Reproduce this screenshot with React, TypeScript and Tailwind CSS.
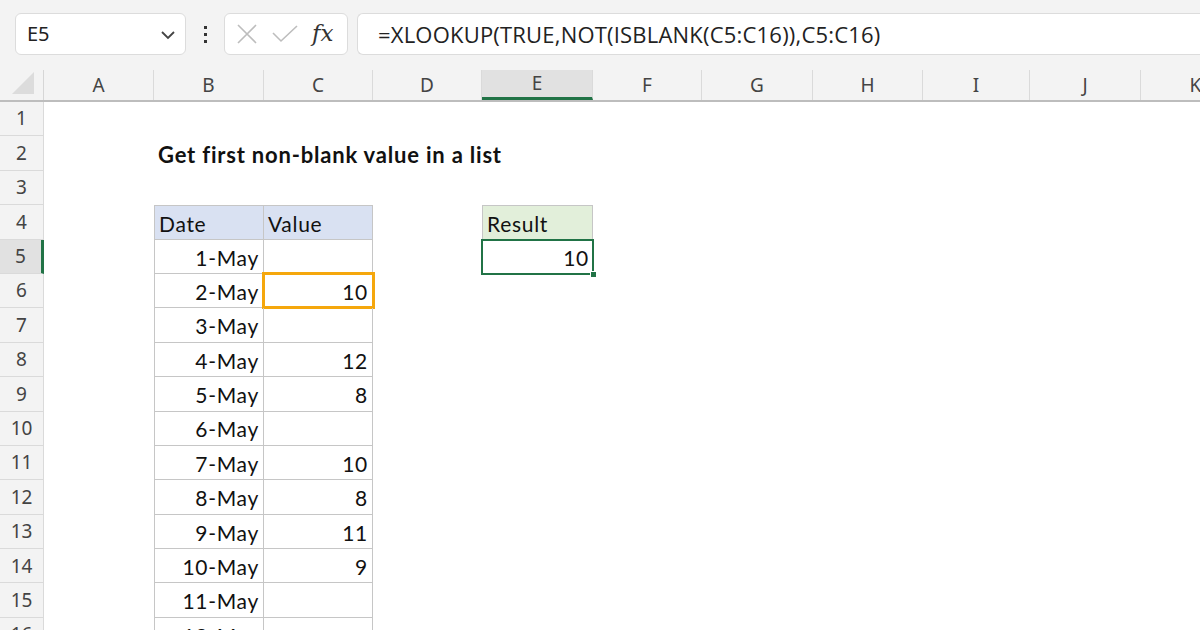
import React from "react";

const cols = [
  { l: "A", w: 110 },
  { l: "B", w: 110 },
  { l: "C", w: 109 },
  { l: "D", w: 109 },
  { l: "E", w: 111 },
  { l: "F", w: 109 },
  { l: "G", w: 111 },
  { l: "H", w: 110 },
  { l: "I", w: 107 },
  { l: "J", w: 111 },
  { l: "K", w: 110 },
];

const dates: [string, string][] = [
  ["1-May", ""],
  ["2-May", "10"],
  ["3-May", ""],
  ["4-May", "12"],
  ["5-May", "8"],
  ["6-May", ""],
  ["7-May", "10"],
  ["8-May", "8"],
  ["9-May", "11"],
  ["10-May", "9"],
  ["11-May", ""],
  ["12-May", ""],
];

const cellFont = { fontFamily: "Lato, 'Liberation Sans', sans-serif" };
const uiFont = { fontFamily: "'Noto Sans', 'Open Sans', sans-serif" };

function Cell({ r, c }: { r: number; c: number }) {
  const w = cols[c].w;
  let content: React.ReactNode = null;
  let cls =
    "relative shrink-0 h-full flex items-center text-[21px] tracking-[0.7px] text-[#111] px-[4px] pt-[2px]";
  const inTable = (c === 1 || c === 2) && r >= 4 && r <= 16;
  if (inTable) {
    cls += " border-r border-b border-[#c6c6c6]";
    if (c === 1) cls += " border-l";
    if (r === 4) cls += " border-t bg-[#d9e1f2]";
  }
  if (r === 2 && c === 1) {
    content = (
      <span className="absolute left-[4px] whitespace-nowrap font-bold text-[22px] tracking-[0.8px] text-[#111]">
        Get first non-blank value in a list
      </span>
    );
  }
  if (r === 4 && c === 1) content = <span>Date</span>;
  if (r === 4 && c === 2) content = <span>Value</span>;
  if (r >= 5 && r <= 16 && c === 1) {
    cls += " justify-end";
    content = <span>{dates[r - 5][0]}</span>;
  }
  if (r >= 5 && r <= 16 && c === 2) {
    cls += " justify-end";
    content = <span>{dates[r - 5][1]}</span>;
  }
  if (r === 4 && c === 4) {
    cls += " bg-[#e2efda] border border-[#c6c6c6]";
    content = <span>Result</span>;
  }
  if (r === 5 && c === 4) {
    cls += " justify-end";
    content = (
      <>
        <span>10</span>
        <div className="absolute -left-[1px] -top-[1px] -right-[1px] -bottom-[1px] border-2 border-[#217346]" />
        <div className="absolute -right-[4px] -bottom-[4px] w-[7px] h-[7px] bg-[#217346] border border-white" />
      </>
    );
  }
  return (
    <div className={cls} style={{ width: w, ...cellFont }}>
      {content}
      {r === 6 && c === 2 && (
        <div className="absolute -left-[2px] -top-[2px] -right-[3px] -bottom-[2px] border-[3px] border-[#f5a70c]" />
      )}
    </div>
  );
}

export default function App() {
  const rows = Array.from({ length: 17 }, (_, i) => i + 1);
  return (
    <div className="w-[1200px] h-[630px] overflow-hidden bg-white relative">
      {/* toolbar */}
      <div className="h-[70px] bg-[#f3f3f3] flex items-start pt-[13px] pl-[15px]" style={uiFont}>
        <div className="w-[171px] h-[42px] bg-white rounded-[6px] border border-[#dcdcdc] flex items-center justify-between pl-[11px] pr-[9px]">
          <span className="text-[20px] text-[#222]">E5</span>
          <svg width="16" height="10" viewBox="0 0 16 10" className="mt-[2px]">
            <path d="M2 2 L8 8 L14 2" fill="none" stroke="#444" strokeWidth="1.8" />
          </svg>
        </div>
        <div className="w-[38px] h-[42px] flex flex-col items-center justify-center gap-[4px]">
          <div className="w-[3px] h-[3px] bg-[#333]" />
          <div className="w-[3px] h-[3px] bg-[#333]" />
          <div className="w-[3px] h-[3px] bg-[#333]" />
        </div>
        <div className="w-[124px] h-[42px] bg-white rounded-[6px] border border-[#dcdcdc] flex items-center pl-[11px] gap-[14px]">
          <svg width="22" height="22" viewBox="0 0 22 22">
            <path d="M2 2 L20 20 M20 2 L2 20" stroke="#bdbdbd" strokeWidth="1.6" fill="none" />
          </svg>
          <svg width="26" height="20" viewBox="0 0 26 20">
            <path d="M1 9 L9 17 L25 2" stroke="#bdbdbd" strokeWidth="1.6" fill="none" />
          </svg>
          <span
            className="italic text-[23px] text-[#333] leading-none -mt-[2px]"
            style={{ fontFamily: "'DejaVu Serif', 'Liberation Serif', serif" }}
          >
            fx
          </span>
        </div>
        <div className="ml-[9px] flex-1 h-[42px] bg-white rounded-l-[6px] border border-r-0 border-[#dcdcdc] flex items-center pl-[20px]">
          <span
            className="text-[22px] tracking-[0.2px] text-[#222]"
            style={{ fontFamily: "'Open Sans', 'Noto Sans', sans-serif" }}
          >
            =XLOOKUP(TRUE,NOT(ISBLANK(C5:C16)),C5:C16)
          </span>
        </div>
      </div>

      {/* column headers */}
      <div className="h-[32px] flex bg-[#f3f3f3] border-b-2 border-[#bdbdbd]" style={uiFont}>
        <div className="w-[44px] shrink-0 h-full border-r border-[#d6d6d6] relative">
          <svg width="24" height="24" viewBox="0 0 24 24" className="absolute right-[7px] bottom-[4px]">
            <path d="M22 0 L22 22 L0 22 Z" fill="#dcdcdc" />
          </svg>
        </div>
        {cols.map((c) => (
          <div
            key={c.l}
            className={
              "shrink-0 h-full flex items-center justify-center text-[19px] text-[#444] border-r border-[#dadada] " +
              (c.l === "E" ? "bg-[#e1e1e1] border-b-[3px] border-b-[#217346] -mb-[2px] h-[33px]" : "")
            }
            style={{ width: c.w }}
          >
            {c.l}
          </div>
        ))}
      </div>

      {/* rows */}
      {rows.map((r) => (
        <div key={r} className="flex h-[34.4px]">
          <div
            className={
              "w-[44px] shrink-0 h-full flex items-center justify-center text-[19px] text-[#444] border-b border-[#dadada] " +
              (r === 5 ? "bg-[#e1e1e1] border-r-[3px] border-r-[#217346]" : "bg-[#f3f3f3] border-r border-[#d6d6d6]")
            }
            style={uiFont}
          >
            {r}
          </div>
          {cols.map((_, ci) => (
            <Cell key={ci} r={r} c={ci} />
          ))}
        </div>
      ))}
    </div>
  );
}
